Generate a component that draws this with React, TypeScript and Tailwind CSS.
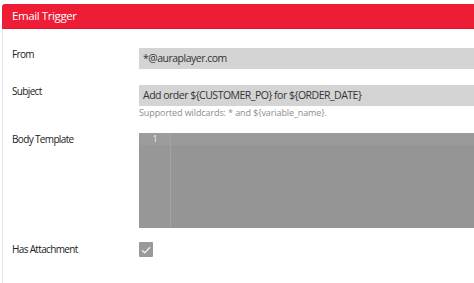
import React from "react";

export default function App() {
  return (
    <div className="w-[474px] h-[283px] bg-white overflow-hidden pt-[4px] pl-[2px]" style={{ fontFamily: '"Open Sans", sans-serif' }}>
      <div className="h-[25px] bg-[#ee1c35] rounded-tl-[3px] flex items-center pl-[10px] border-b border-[#d51a2f]">
        <span className="text-white text-[11.5px] tracking-[-0.4px] leading-none">Email Trigger</span>
      </div>
      <div className="border-l border-[#e6e6e6] h-[260px] pt-[19px]">
        <div className="flex items-start">
          <div className="w-[136px] pl-[9px] leading-[13px] text-[10px] tracking-[-0.65px] text-[#222] font-medium">From</div>
          <div className="flex-1 h-[21px] bg-[#d4d4d4] flex items-center pl-[4px] text-[10.5px] tracking-[-0.5px] text-[#333]">*@auraplayer.com</div>
        </div>
        <div className="flex items-start mt-[16px]">
          <div className="w-[136px] pl-[9px] leading-[13px] text-[10px] tracking-[-0.65px] text-[#222] font-medium">Subject</div>
          <div className="flex-1">
            <div className="h-[21px] bg-[#d4d4d4] flex items-center pl-[4px] text-[10.5px] tracking-[-0.5px] text-[#333]">{"Add order ${CUSTOMER_PO} for ${ORDER_DATE}"}</div>
            <div className="text-[9px] tracking-[-0.1px] text-[#8c8c8c] mt-[0px] leading-[13px]">{"Supported wildcards: * and ${variable_name}."}</div>
          </div>
        </div>
        <div className="flex items-start mt-[14px]">
          <div className="w-[136px] pl-[9px] leading-[13px] text-[10px] tracking-[-0.65px] text-[#222] font-medium">Body Template</div>
          <div className="flex-1 h-[95px] bg-[#959595] flex">
            <div className="w-[32px] bg-[#979797] border-r border-[#a3a3a3]">
              <div className="h-[12px] bg-[#9c9c9c] flex items-center justify-center text-[9px] text-[#f0f0f0] pl-[1px]">1</div>
            </div>
            <div className="flex-1">
              <div className="h-[12px] bg-[#9a9a9a]" />
            </div>
          </div>
        </div>
        <div className="flex items-start mt-[14px]">
          <div className="w-[136px] pl-[9px] leading-[13px] pt-[1px] text-[10px] tracking-[-0.65px] text-[#222] font-medium">Has Attachment</div>
          <div className="w-[14px] h-[15px] bg-[#999] rounded-[1px] flex items-center justify-center">
            <svg width="10" height="8" viewBox="0 0 10 8"><path d="M1 4.2 L3.8 6.8 L9 1.2" fill="none" stroke="#eee" strokeWidth="1.3" /></svg>
          </div>
        </div>
      </div>
    </div>
  );
}
